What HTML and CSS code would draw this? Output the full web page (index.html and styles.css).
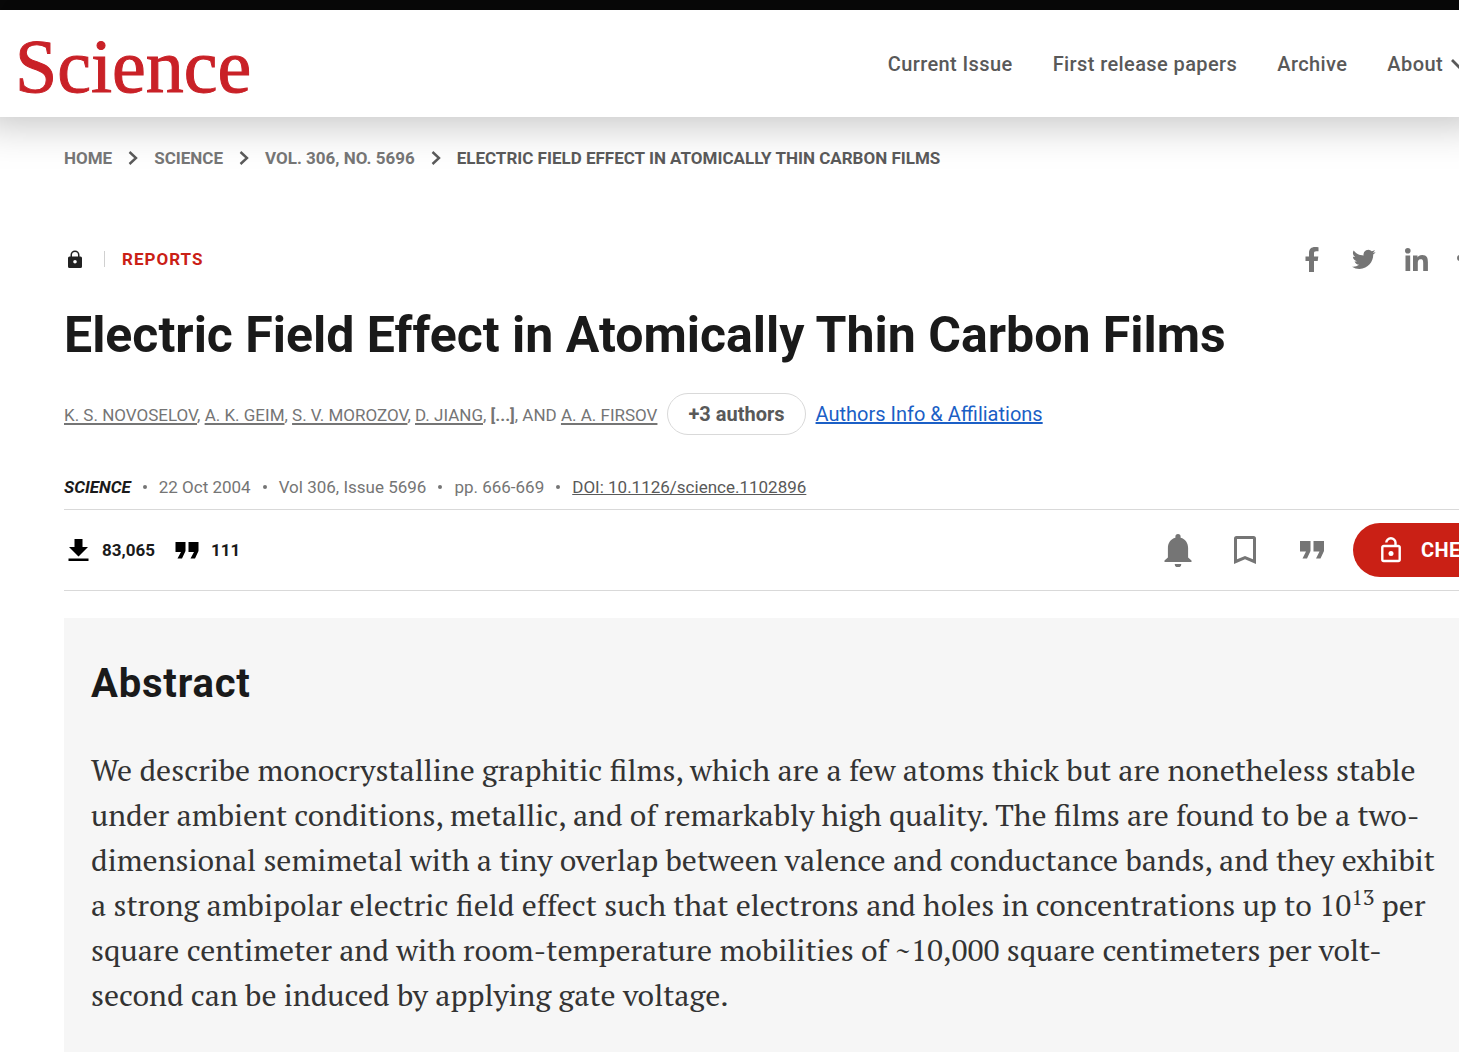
FILE: index.html
```html
<!DOCTYPE html>
<html lang="en">

<head>
    <meta charset="UTF-8">
    <meta name="viewport" content="width=device-width, initial-scale=1.0">
    <title>Electric Field Effect in Atomically Thin Carbon Films | Science</title>
    <link rel="stylesheet" href="styles.css">
</head>

<body>
    <div class="topbar"></div>
    <header class="header">
        <a class="logo" href="#">Science</a>
        <nav class="main-nav">
            <a href="#">Current Issue</a>
            <a href="#">First release papers</a>
            <a href="#">Archive</a>
            <a href="#" class="has-menu">About
                <svg width="16" height="10" viewBox="0 0 16 10"><path d="M1 1 8 8l7-7" fill="none" stroke="currentColor" stroke-width="2.800"/></svg>
            </a>
        </nav>
    </header>

    <main class="page">
        <nav class="breadcrumb">
            <a href="#">HOME</a>
            <svg class="sep" viewBox="0 0 10 14"><path d="M1.500 1 8 7l-6.500 6" fill="none" stroke="currentColor" stroke-width="2.400"/></svg>
            <a href="#">SCIENCE</a>
            <svg class="sep" viewBox="0 0 10 14"><path d="M1.500 1 8 7l-6.500 6" fill="none" stroke="currentColor" stroke-width="2.400"/></svg>
            <a href="#">VOL. 306, NO. 5696</a>
            <svg class="sep" viewBox="0 0 10 14"><path d="M1.500 1 8 7l-6.500 6" fill="none" stroke="currentColor" stroke-width="2.400"/></svg>
            <span class="current">ELECTRIC FIELD EFFECT IN ATOMICALLY THIN CARBON FILMS</span>
        </nav>

        <div class="kicker">
            <svg class="lock" viewBox="0 0 14 18"><path fill-rule="evenodd" d="M1.500 6.500H2.500V5a4.500 4.500 0 0 1 9 0v1.500h1A1.500 1.500 0 0 1 14 8v8.500a1.500 1.500 0 0 1-1.500 1.500h-11A1.500 1.500 0 0 1 0 16.500V8a1.500 1.500 0 0 1 1.500-1.500zM4 6.500h6V5a3 3 0 0 0-6 0zM7 10a1.800 1.800 0 1 0 0 3.600A1.800 1.800 0 0 0 7 10z"/></svg>
            <span class="divider"></span>
            <span class="type">REPORTS</span>
            <div class="share">
                <a href="#" aria-label="Facebook"><svg width="14" height="25" viewBox="0 0 14 25"><path d="M4 25V14H.5V9.500H4V6c0-4 2.300-6 6-6 1.700 0 3 .2 3.500.3v4h-2.300C9.300 4.300 9 5.200 9 6.500v3h4.300l-.6 4.500H9v11z"/></svg></a>
                <a href="#" aria-label="Twitter"><svg width="24" height="24" viewBox="0 0 24 24"><path d="M23.600 4.900a9.600 9.600 0 0 1-2.800.8 4.800 4.800 0 0 0 2.100-2.700 9.700 9.700 0 0 1-3.100 1.200A4.850 4.850 0 0 0 11.600 8.600 13.700 13.700 0 0 1 1.600 3.500a4.850 4.850 0 0 0 1.500 6.500A4.800 4.800 0 0 1 .9 9.400v.1c0 2.300 1.700 4.300 3.900 4.700a4.900 4.900 0 0 1-2.200.1 4.850 4.850 0 0 0 4.500 3.400A9.700 9.700 0 0 1 0 19.700 13.700 13.700 0 0 0 7.400 21.900c8.900 0 13.800-7.400 13.800-13.800v-.6a9.900 9.900 0 0 0 2.400-2.600z"/></svg></a>
                <a href="#" aria-label="LinkedIn"><svg width="23" height="23" viewBox="0 0 23 23"><path d="M.5 7.500h4.700V23H.5zM2.800 0a2.800 2.800 0 1 1 0 5.600 2.800 2.800 0 0 1 0-5.600zM8 7.500h4.500v2.100c.7-1.300 2.200-2.500 4.700-2.500 4.800 0 5.700 3 5.700 7.200V23h-4.700v-7.800c0-1.900 0-4-2.500-4s-2.900 2-2.900 3.900V23H8z"/></svg></a>
                <a href="#" aria-label="Reddit"><svg width="29" height="24" viewBox="0 0 29 24"><circle cx="3" cy="11" r="3"/><ellipse cx="14" cy="15" rx="11" ry="8"/><circle cx="26" cy="11" r="3"/></svg></a>
            </div>
        </div>

        <h1>Electric Field Effect in Atomically Thin Carbon Films</h1>

        <div class="authors">
            <p><a href="#">K. S. NOVOSELOV</a>, <a href="#">A. K. GEIM</a>, <a href="#">S. V. MOROZOV</a>, <a href="#">D. JIANG</a>, <b>[...]</b>, AND <a href="#">A. A. FIRSOV</a></p>
            <button class="more-authors">+3 authors</button>
            <a class="affiliations" href="#">Authors Info &amp; Affiliations</a>
        </div>

        <div class="meta">
            <span class="journal">SCIENCE</span>
            <span class="dot"></span>
            <span>22 Oct 2004</span>
            <span class="dot"></span>
            <span>Vol 306, Issue 5696</span>
            <span class="dot"></span>
            <span>pp. 666-669</span>
            <span class="dot"></span>
            <a href="#">DOI: 10.1126/science.1102896</a>
        </div>

        <div class="toolbar">
            <div class="metrics">
                <svg width="22" height="22" viewBox="0 0 22 22"><path d="M6.500 0h8v8H20L10.500 17.500 1 8h5.500zM.5 19.500h20V22H.5z"/></svg>
                <span>83,065</span>
                <svg class="cites" width="24" height="17" viewBox="0 0 24 17"><path d="M.5 0h10v9L7 16.500H2.500L6 10H.5zM13.500 0h10v9L20 16.500h-4.500L19 10h-5.500z"/></svg>
                <span>111</span>
            </div>
            <div class="actions">
                <button class="icon-btn" aria-label="Alerts"><svg width="28" height="33" viewBox="0 0 28 33"><path d="M14 0a2.600 2.600 0 0 0-2.600 2.600v1.100C6.500 4.900 3.900 9 3.900 14v9.500L.5 26.500V28h27v-1.500l-3.400-3V14c0-5-2.600-9.100-7.500-10.300V2.600A2.600 2.600 0 0 0 14 0zM10.700 30h6.600a3.300 3.300 0 0 1-6.600 0z"/></svg></button>
                <button class="icon-btn" aria-label="Bookmark"><svg width="22" height="28" viewBox="0 0 22 28"><path fill-rule="evenodd" d="M2.500 0h17A2.500 2.500 0 0 1 22 2.500V28l-11-4.800L0 28V2.500A2.500 2.500 0 0 1 2.500 0zM3 3v20.300l8-3.400 8 3.400V3z"/></svg></button>
                <button class="icon-btn" aria-label="Cite"><svg width="24" height="18" viewBox="0 0 24 18"><path d="M0 0h10.500v10L7 17.500H2.500L6 10.500H0zM13.500 0H24v10l-3.500 7.500H16l3.500-7H13.500z"/></svg></button>
                <button class="access">
                    <svg width="20" height="26" viewBox="0 0 20 26"><path d="M2.800 9h14.400A1.500 1.500 0 0 1 18.700 10.500v12a1.500 1.500 0 0 1-1.500 1.500H2.800a1.500 1.500 0 0 1-1.500-1.500v-12A1.500 1.500 0 0 1 2.800 9zM5.300 5.600a4.600 4.300 0 0 1 9.200 0V9" fill="none" stroke="currentColor" stroke-width="2.400"/><circle cx="10" cy="16.500" r="2.500" fill="currentColor"/></svg>
                    CHECK ACCESS
                </button>
            </div>
        </div>

        <section class="abstract">
            <h2>Abstract</h2>
            <p>We describe monocrystalline graphitic films, which are a few atoms thick but are nonetheless stable under ambient conditions, metallic, and of remarkably high quality. The films are found to be a two-dimensional semimetal with a tiny overlap between valence and conductance bands, and they exhibit a strong ambipolar electric field effect such that electrons and holes in concentrations up to 10<sup>13</sup> per square centimeter and with room-temperature mobilities of ~10,000 square centimeters per volt-second can be induced by applying gate voltage.</p>
        </section>
    </main>
</body>

</html>
```
FILE: styles.css
```css
body {
    margin: 0;
    font-family: Roboto, Arial, sans-serif;
    font-size: 17px;
    color: #757575;
    background-color: #fff;
    overflow-x: hidden;
}

button {
    font-family: inherit;
    cursor: pointer;
}

.topbar {
    height: 10px;
    background-color: #0a0a0a;
}

.header {
    display: flex;
    align-items: center;
    justify-content: space-between;
    height: 107px;
    padding-left: 15px;
    margin-right: -8px;
    background-color: #fff;
    box-shadow: 0 -14px 40px 20px rgba(0, 0, 0, 0.25);
}

.logo {
    padding-top: 4px;
    font-family: "Liberation Serif", "Times New Roman", serif;
    font-size: 76px;
    line-height: 100px;
    color: #c92127;
    text-decoration: none;
    -webkit-text-stroke: 1px #c92127;
}

.main-nav {
    display: flex;
    gap: 40px;
}

.main-nav a {
    font-size: 20px;
    font-weight: 500;
    letter-spacing: 0.02em;
    color: #595959;
    text-decoration: none;
}

.has-menu {
    display: flex;
    align-items: center;
    gap: 8px;
}

.page {
    margin-right: -140px;
    padding: 29px 0 0 64px;
}

.breadcrumb {
    display: flex;
    align-items: center;
    gap: 16px;
    height: 24px;
    font-weight: 700;
}

.breadcrumb a {
    color: #757575;
    text-decoration: none;
}

.breadcrumb .current,
.sep {
    color: #595959;
}

.sep {
    width: 10px;
    height: 14px;
}

.kicker {
    display: flex;
    align-items: center;
    height: 28px;
    margin-top: 75px;
}

.lock {
    width: 14px;
    height: 18px;
    margin-left: 4px;
    fill: #222;
}

.divider {
    width: 1px;
    height: 16px;
    margin: 0 17px 0 22px;
    background-color: #d0d0d0;
}

.type {
    font-weight: 700;
    letter-spacing: 1px;
    color: #ca2015;
}

.share {
    display: flex;
    align-items: center;
    gap: 29px;
    margin-left: auto;
    margin-right: 113px;
}

.share a {
    display: flex;
    justify-content: center;
    min-width: 23px;
}

.share svg {
    fill: #757575;
}

h1 {
    margin: 32px 0 0;
    font-size: 50px;
    line-height: 60px;
    font-weight: 700;
    color: #1a1a1a;
}

.authors {
    display: flex;
    align-items: center;
    gap: 10px;
    margin-top: 28px;
}

.authors p {
    margin: 0;
    padding-top: 2px;
}

.authors p a {
    color: #757575;
    text-decoration-thickness: 2px;
    text-underline-offset: 2px;
    text-decoration-skip-ink: none;
}

.more-authors {
    height: 42px;
    padding: 0 20px;
    font-size: 20px;
    font-weight: 700;
    color: #595959;
    background-color: #fff;
    border: 1px solid #d9d9d9;
    border-radius: 21px;
}

.affiliations {
    font-size: 20px;
    color: #1b5fc6;
}

.meta {
    display: flex;
    align-items: center;
    height: 24px;
    margin-top: 40px;
    padding-bottom: 10px;
    border-bottom: 1px solid #d9d9d9;
}

.journal {
    font-weight: 700;
    font-style: italic;
    color: #1a1a1a;
}

.dot {
    width: 4px;
    height: 4px;
    margin: 0 12px;
    border-radius: 50%;
    background-color: #757575;
}

.meta a {
    color: #595959;
}

.toolbar {
    display: flex;
    align-items: center;
    justify-content: space-between;
    height: 80px;
    border-bottom: 1px solid #d9d9d9;
}

.metrics {
    display: flex;
    align-items: center;
    gap: 12px;
    padding-left: 4px;
    font-weight: 700;
    color: #1a1a1a;
}

.cites {
    margin-left: 8px;
}

.actions {
    display: flex;
    align-items: center;
}

.icon-btn {
    display: flex;
    align-items: center;
    justify-content: center;
    width: 67px;
    height: 54px;
    padding: 0;
    border: none;
    background: none;
}

.icon-btn svg {
    fill: #757575;
}

.access {
    display: flex;
    align-items: center;
    gap: 20px;
    width: 246px;
    height: 54px;
    margin-left: 8px;
    padding: 0 28px;
    font-size: 20px;
    font-weight: 700;
    letter-spacing: 0.02em;
    white-space: nowrap;
    color: #fff;
    background-color: #ca2015;
    border: none;
    border-radius: 27px;
}

.abstract {
    margin: 27px 124px 0 0;
    padding: 42px 27px 36px;
    background-color: #f6f6f6;
}

h2 {
    margin: 0;
    font-size: 40px;
    line-height: 48px;
    letter-spacing: 0.02em;
    color: #1a1a1a;
}

.abstract p {
    margin: 40px 0 0;
    font-family: "PT Serif", "Liberation Serif", serif;
    font-size: 30px;
    line-height: 45px;
    color: #333;
}

sup {
    font-size: 22px;
    line-height: 0;
}
```
